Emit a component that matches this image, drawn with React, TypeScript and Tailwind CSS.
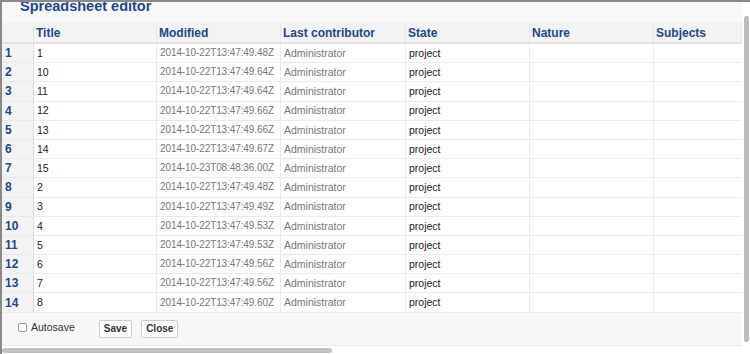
import React from "react";

const rows = [
  ["1", "2014-10-22T13:47:49.48Z"],
  ["10", "2014-10-22T13:47:49.64Z"],
  ["11", "2014-10-22T13:47:49.64Z"],
  ["12", "2014-10-22T13:47:49.66Z"],
  ["13", "2014-10-22T13:47:49.66Z"],
  ["14", "2014-10-22T13:47:49.67Z"],
  ["15", "2014-10-23T08:48:36.00Z"],
  ["2", "2014-10-22T13:47:49.48Z"],
  ["3", "2014-10-22T13:47:49.49Z"],
  ["4", "2014-10-22T13:47:49.53Z"],
  ["5", "2014-10-22T13:47:49.53Z"],
  ["6", "2014-10-22T13:47:49.56Z"],
  ["7", "2014-10-22T13:47:49.56Z"],
  ["8", "2014-10-22T13:47:49.60Z"],
];

const cols = "grid-cols-[32px_123px_124px_125px_124px_124px_88px]";
const cell = "border-r border-[#ebebeb] pl-[3px] flex items-center whitespace-nowrap overflow-hidden";

export default function App() {
  return (
    <div
      className="w-[750px] h-[354px] overflow-hidden bg-white flex flex-col border-t-2 border-l-2 border-[#8a8a8a]"
      style={{ fontFamily: '"Liberation Sans", Arial, sans-serif' }}
    >
      <div className="flex flex-1 min-h-0">
        <div className="flex flex-col w-[740px]">
          {/* title */}
          <div className="h-[20px] shrink-0 bg-[#f8f8f8] overflow-hidden pl-[18px]">
            <div className="text-[14.5px] font-bold text-[#1d4786] leading-[20px] -mt-[6px] whitespace-nowrap">
              Spreadsheet editor
            </div>
          </div>

          {/* header */}
          <div className={`grid ${cols} h-[22px] shrink-0 bg-[#f3f3f3] border-b-2 border-[#e2e2e2] text-[12px] font-bold text-[#1d4786]`}>
            <div className="border-r border-[#e2e2e2]" />
            {["Title", "Modified", "Last contributor", "State", "Nature", "Subjects"].map((h) => (
              <div key={h} className="border-r border-[#e6e6e6] pl-[2px] pt-[2px] flex items-center whitespace-nowrap">
                {h}
              </div>
            ))}
          </div>

          {/* body */}
          <div className="flex flex-col shrink-0">
            {rows.map(([t, m], i) => (
              <div
                key={i}
                className={`grid ${cols} h-[19.2px] border-b border-[#ebebeb] text-[10.5px] leading-none`}
              >
                <div className="bg-[#f3f3f3] border-r border-[#dcdcdc] pl-[3px] flex items-center font-bold text-[12px] text-[#1d4786]">
                  {i + 1}
                </div>
                <div className={`${cell} text-[#222]`}>{t}</div>
                <div className={`${cell} text-[#777] text-[10px] tracking-[-0.1px]`}>{m}</div>
                <div className={`${cell} text-[#777]`}>Administrator</div>
                <div className={`${cell} text-[#222]`}>project</div>
                <div className="border-r border-[#ebebeb]" />
                <div />
              </div>
            ))}
          </div>

          {/* footer */}
          <div className="flex-1 bg-[#f7f7f7] border-b border-[#e6e6e6] flex items-center text-[10.5px] text-[#333]">
            <label className="flex items-center gap-[4px] ml-[16px] mb-[2px]">
              <span className="w-[9px] h-[9px] border border-[#999] rounded-[2px] bg-white" />
              Autosave
            </label>
            <button className="ml-[24px] h-[18px] px-[4px] border border-[#ccc] rounded-[2px] bg-white text-[10px] font-bold text-[#333]">
              Save
            </button>
            <button className="ml-[9px] h-[18px] px-[4px] border border-[#ccc] rounded-[2px] bg-white text-[10px] font-bold text-[#333]">
              Close
            </button>
          </div>
        </div>

        {/* vertical scrollbar */}
        <div className="w-[8px] flex flex-col pt-[14px] pb-[4px] items-center">
          <div className="w-[5px] flex-1 rounded-full bg-[#bdbdbd]" />
        </div>
      </div>

      {/* horizontal scrollbar */}
      <div className="h-[8px] flex items-center">
        <div className="w-[330px] h-[5px] rounded-full bg-[#c2c2c2]" />
      </div>
    </div>
  );
}
